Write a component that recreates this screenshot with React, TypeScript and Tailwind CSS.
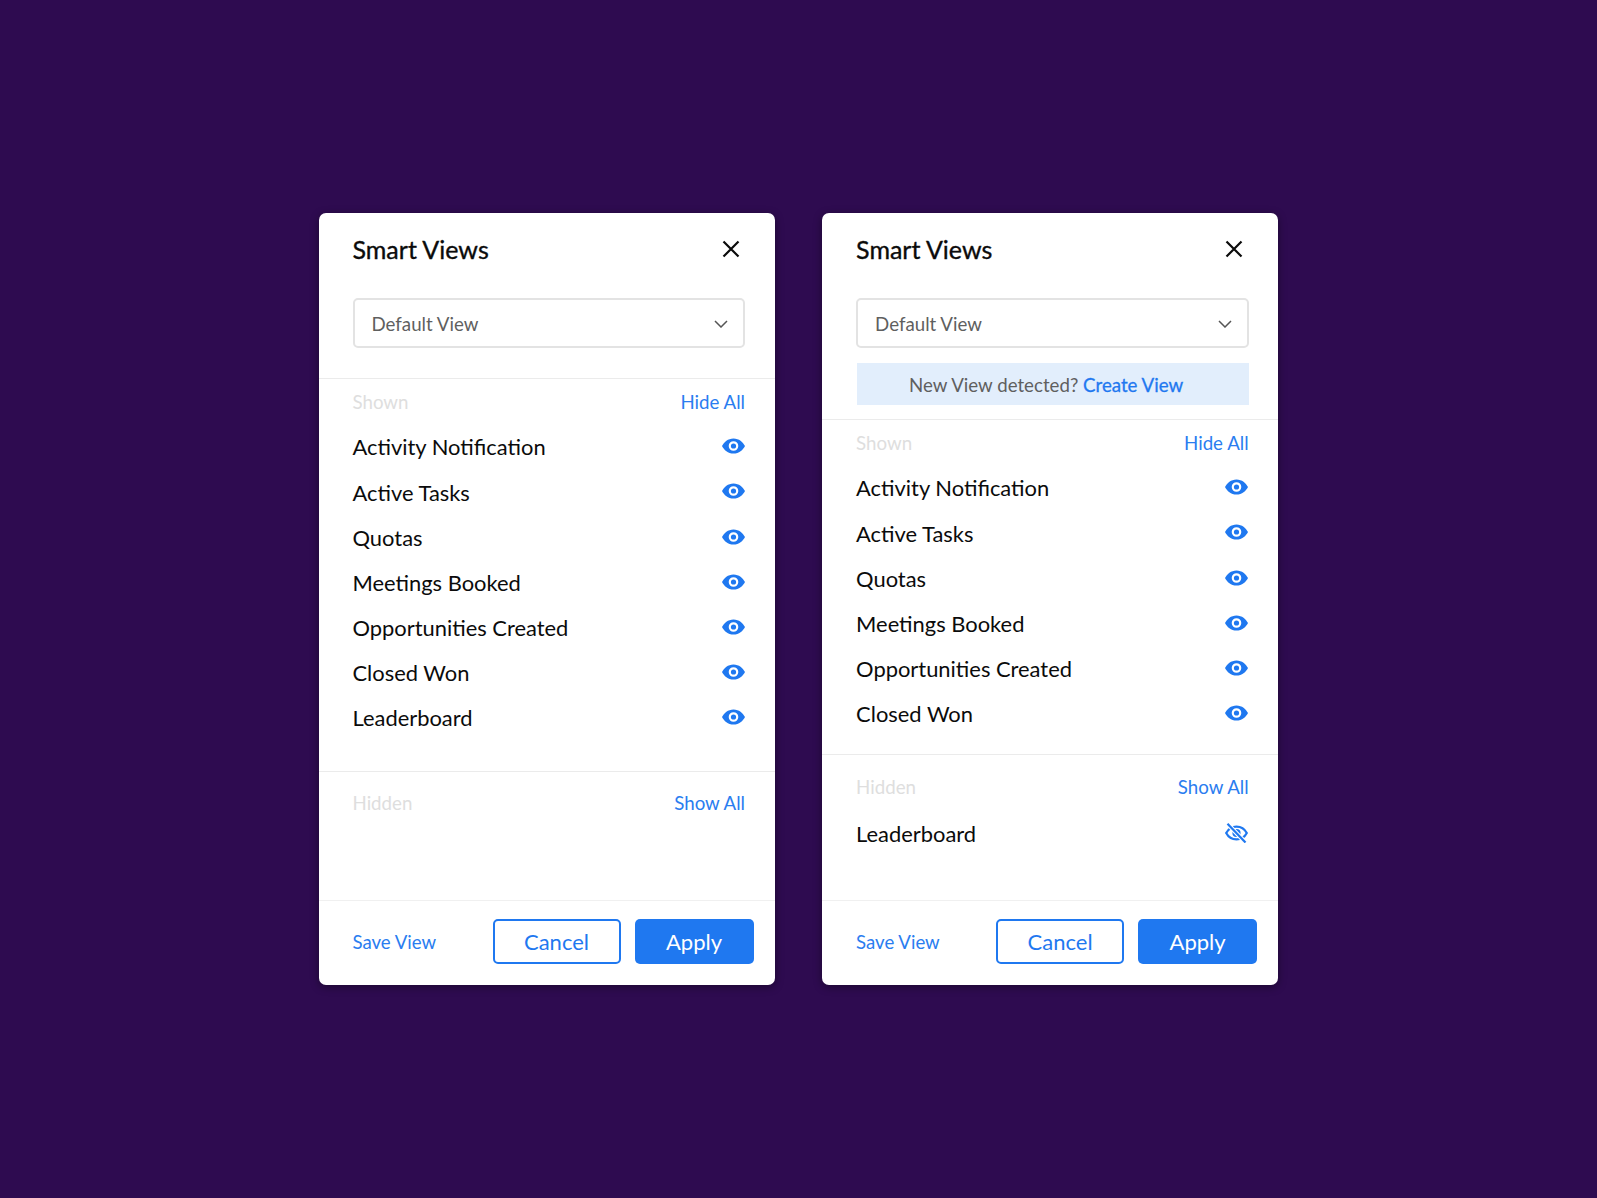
const Eye = () => (
  <svg width="24" height="16" viewBox="0 0 24 16" className="mb-[2px] shrink-0">
    <path fillRule="evenodd" fill="#1f78f0" d="M12.500 0.400C7 0.400 3 4 1 8c2 4 6 7.600 11.500 7.600S22 12 24 8C22 4 18 0.400 12.500 0.400ZM12.500 3.200a4.800 4.800 0 1 1 0 9.600a4.800 4.800 0 0 1 0-9.600Z" />
    <circle cx="12.500" cy="8" r="2.600" fill="#1f78f0" />
  </svg>
);

const EyeOff = () => (
  <svg width="24" height="20" viewBox="0 0 24 20" fill="none" stroke="#1f78f0" strokeWidth="2.200" className="mb-[2px] shrink-0">
    <path d="M2.200 10c2-3.800 5.600-6.400 10.300-6.400S20.800 6.200 22.800 10c-2 3.800-5.600 6.400-10.300 6.400S4.200 13.800 2.200 10Z" />
    <circle cx="12.500" cy="10" r="3" fill="#1f78f0" />
    <path d="M3.500 0.800 21.500 19.500" stroke="#ffffff" strokeWidth="4.400" />
    <path d="M3.500 0.800 21.500 19.500" />
  </svg>
);

const Close = () => (
  <svg width="18" height="18" viewBox="0 0 18 18" fill="none" stroke="#0b0b0b" strokeWidth="2.200">
    <path d="M1.500 1.500 16.500 16.500M16.500 1.500 1.500 16.500" />
  </svg>
);

const Chevron = () => (
  <svg width="14" height="8" viewBox="0 0 14 8" fill="none" stroke="#555555" strokeWidth="1.500" className="mt-[2px]">
    <path d="M1 1 7 7 13 1" />
  </svg>
);

const Row = ({ label, hidden }: { label: string; hidden?: boolean }) => (
  <div className="flex h-[45.2px] items-center justify-between pl-[34px] pr-[30px]">
    <span className="text-[21.900px] leading-none text-[#0b0b0b]">{label}</span>
    {hidden ? <EyeOff /> : <Eye />}
  </div>
);

const SectionHead = ({ label, action }: { label: string; action: string }) => (
  <div className="flex items-center justify-between pl-[34px] pr-[29.500px] text-[18.700px] leading-6">
    <span className="text-[#dedede]">{label}</span>
    <span className="text-[#2a7df0]">{action}</span>
  </div>
);

const Card = ({
  banner,
  shown,
  hidden,
}: {
  banner?: boolean;
  shown: string[];
  hidden: string[];
}) => (
  <div className="flex h-[772.500px] w-[456px] flex-col rounded-[7px] bg-white shadow-[0_2px_8px_rgba(0,0,0,0.4)]">
    <div className={`shrink-0 border-b border-[#ebebeb] ${banner ? "h-[207px]" : "h-[166px]"}`}>
      <div className="flex items-center justify-between pl-[34px] pr-[35px] pt-[20.500px]">
        <h2 className="text-[25px] leading-[32px] text-[#0b0b0b] [-webkit-text-stroke:0.350px_#0b0b0b]">Smart Views</h2>
        <Close />
      </div>
      <div className="ml-[34px] mr-[29.500px] mt-[32.500px] flex h-[50px] items-center justify-between rounded-[5px] border-2 border-[#e3e3e3] pl-[17px] pr-[15px]">
        <span className="pt-[3px] text-[18.700px] text-[#5f5f5f]">Default View</span>
        <Chevron />
      </div>
      {banner && (
        <div className="ml-[35px] mr-[29px] mt-[15px] flex h-[42px] items-center justify-center bg-[#e2eefc] pr-[14px] pt-[3px] text-[18.700px] text-[#5f5f5f]">
          <span>
            New View detected? <span className="text-[#1f78f0] [-webkit-text-stroke:0.300px_#1f78f0]">Create View</span>
          </span>
        </div>
      )}
    </div>
    <div className={`shrink-0 border-b border-[#ebebeb] pt-[11px] ${banner ? "h-[335px]" : "h-[393px]"}`}>
      <SectionHead label="Shown" action="Hide All" />
      <div className="mt-[11px]">
        {shown.map((s) => (
          <Row key={s} label={s} />
        ))}
      </div>
    </div>
    <div className={`min-h-0 flex-1 border-b border-[#f0f0f0] ${banner ? "pt-[20.500px]" : "pt-[19.500px]"}`}>
      <SectionHead label="Hidden" action="Show All" />
      <div className="mt-[12px]">
        {hidden.map((s) => (
          <Row key={s} label={s} hidden />
        ))}
      </div>
    </div>
    <div className="flex h-[84px] shrink-0 items-center pb-[3px] pl-[34px] pr-[21px]">
      <span className="pt-[3px] text-[18.600px] text-[#2a7df0]">Save View</span>
      <button className="ml-auto h-[45px] w-[128px] rounded-[5px] border-2 border-[#1f78f0] bg-white text-[22px] text-[#1f78f0]">
        Cancel
      </button>
      <button className="ml-[14px] h-[45px] w-[119px] rounded-[5px] bg-[#1f78f0] text-[22px] text-white">
        Apply
      </button>
    </div>
  </div>
);

const all = [
  "Activity Notification",
  "Active Tasks",
  "Quotas",
  "Meetings Booked",
  "Opportunities Created",
  "Closed Won",
];

export default function App() {
  return (
    <div className="flex h-[1198px] w-[1597px] items-start gap-[47.600px] bg-[#2e0b50] pl-[318.500px] pt-[212.700px] font-['Lato',sans-serif]">
      <Card shown={[...all, "Leaderboard"]} hidden={[]} />
      <Card banner shown={all} hidden={["Leaderboard"]} />
    </div>
  );
}
